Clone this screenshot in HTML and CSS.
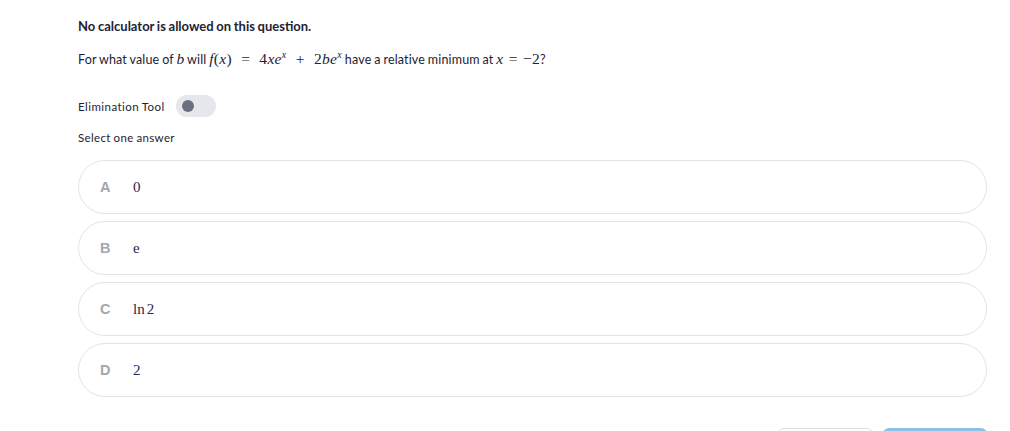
FILE: index.html
```html
<!DOCTYPE html>
<html>
<head>
<meta charset="utf-8">
<link rel="stylesheet" href="styles.css">
</head>
<body>
<div class="page">
  <p class="note">No calculator is allowed on this question.</p>
  <p class="question">For what value of <span class="m mi">b</span> will <span class="m"><span class="mi">f</span>(<span class="mi">x</span>) <span class="op">=</span> 4<span class="mi">x</span><span class="mi">e</span><sup class="mi">x</sup> <span class="op">+</span> 2<span class="mi">b</span><span class="mi">e</span><sup class="mi">x</sup></span> have a relative minimum at <span class="m"><span class="mi">x</span> <span class="op op-tight">=</span> −2</span>?</p>
  <div class="tool">
    <span class="tool-label">Elimination Tool</span>
    <span class="toggle"><span class="knob"></span></span>
  </div>
  <p class="select">Select one answer</p>
  <div class="options">
    <div class="option"><span class="letter">A</span><span class="ans">0</span></div>
    <div class="option"><span class="letter">B</span><span class="ans">e</span></div>
    <div class="option"><span class="letter">C</span><span class="ans">ln<span class="thin"></span>2</span></div>
    <div class="option"><span class="letter">D</span><span class="ans">2</span></div>
  </div>
  <div class="actions">
    <span class="btn btn-back"></span>
    <span class="btn btn-next"></span>
  </div>
</div>
</body>
</html>
```
FILE: styles.css
```css
html, body {
  margin: 0;
  padding: 0;
  background: #ffffff;
  overflow: hidden;
}
body {
  font-family: Lato, "Noto Sans", sans-serif;
  color: #1e2233;
  height: 431px;
}
.page {
  width: 909px;
  height: 414px;
  overflow: hidden;
  margin-left: 78px;
  padding-top: 17px;
}
.note {
  margin: 0;
  font-size: 13px;
  font-weight: 700;
  line-height: 18px;
  letter-spacing: 0;
  word-spacing: -0.5px;
}
.question {
  margin: 15px 0 0;
  font-size: 12.5px;
  line-height: 18px;
  letter-spacing: 0.15px;
  word-spacing: -0.5px;
}
.m {
  font-family: "Liberation Serif", "DejaVu Serif", serif;
  font-size: 15.5px;
  letter-spacing: 0.3px;
  word-spacing: 0;
}
.mi {
  font-family: "Liberation Serif", "DejaVu Serif", serif;
  font-style: italic;
}
.op {
  margin: 0 5px;
}
.op-tight {
  margin: 0 1px;
}
sup {
  font-size: 10px;
  line-height: 0;
  vertical-align: 6px;
}
.tool {
  display: flex;
  align-items: center;
  gap: 11px;
  margin-top: 26px;
}
.tool-label {
  font-size: 11.5px;
  letter-spacing: 0.45px;
  word-spacing: -0.5px;
}
.toggle {
  display: flex;
  align-items: center;
  width: 40px;
  height: 22px;
  border-radius: 11px;
  background: #e6e7eb;
  padding-left: 6px;
  box-sizing: border-box;
}
.knob {
  width: 12px;
  height: 12px;
  border-radius: 50%;
  background: #6b7080;
}
.select {
  margin: 13px 0 0;
  font-size: 11.5px;
  line-height: 16px;
  letter-spacing: 0.35px;
  word-spacing: -0.5px;
}
.options {
  display: flex;
  flex-direction: column;
  gap: 7px;
  margin-top: 14px;
}
.option {
  display: flex;
  align-items: center;
  height: 54px;
  box-sizing: border-box;
  border: 1px solid #e2e3e6;
  border-radius: 27px;
  padding-left: 21px;
}
.letter {
  width: 33px;
  font-family: "Liberation Sans", Arial, sans-serif;
  font-size: 14.5px;
  font-weight: 700;
  color: #a2a7af;
}
.ans {
  font-family: "Liberation Serif", "DejaVu Serif", serif;
  font-size: 15px;
  color: #1f2a4f;
}
.thin {
  display: inline-block;
  width: 2px;
}
.actions {
  display: flex;
  justify-content: flex-end;
  gap: 10px;
  margin-top: 31px;
}
.btn {
  display: block;
  height: 30px;
  border-radius: 6px;
}
.btn-back {
  width: 93px;
  border: 1px solid #dedfe2;
}
.btn-next {
  width: 104px;
  background: #8cc1e6;
}
```
